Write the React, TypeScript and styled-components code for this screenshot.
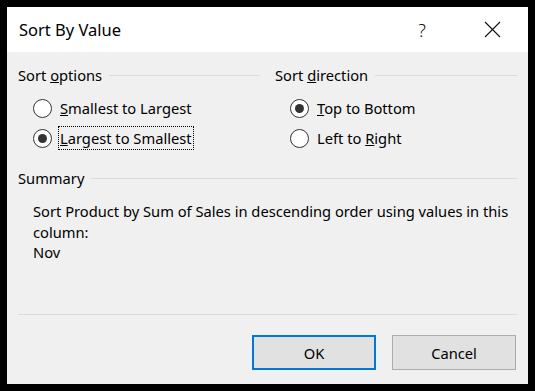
import styled, { createGlobalStyle } from "styled-components";

const GlobalStyle = createGlobalStyle`
  html, body {
    margin: 0;
    padding: 0;
    background: #000;
  }
  body {
    font-family: "Noto Sans", "Open Sans", sans-serif;
    color: #000;
  }
`;

const Frame = styled.div`
  width: 535px;
  height: 391px;
  padding: 7px;
  box-sizing: border-box;
  background: #000;
`;

const Dialog = styled.div`
  width: 521px;
  height: 377px;
  background: #f0f0f0;
  display: flex;
  flex-direction: column;
`;

const TitleBar = styled.div`
  height: 45px;
  background: #fff;
  display: flex;
  align-items: center;
  padding-left: 12px;
  font-size: 16.5px;
`;

const Title = styled.div`
  flex: 1;
`;

const TitleButton = styled.div<{ $gap?: number }>`
  width: 46px;
  height: 45px;
  display: flex;
  align-items: center;
  justify-content: center;
  font-size: 18px;
  font-weight: 300;
  color: #111;
  margin-right: ${(p) => p.$gap ?? 0}px;
`;

const Content = styled.div`
  flex: 1;
  padding: 13px 11px 0 11px;
  font-size: 14.7px;
`;

const Columns = styled.div`
  display: grid;
  grid-template-columns: 242px 1fr;
  column-gap: 15px;
`;

const GroupHeader = styled.div<{ $after?: number }>`
  display: flex;
  align-items: center;
  height: 20px;
  margin-bottom: ${(p) => p.$after ?? 8}px;
`;

const HeaderLine = styled.div`
  flex: 1;
  height: 1px;
  background: #dcdcdc;
  margin-left: 7px;
`;

const RadioRow = styled.div`
  display: flex;
  align-items: center;
  height: 30px;
  padding-left: 15px;
`;

const Circle = styled.span<{ $on?: boolean }>`
  width: 19px;
  height: 19px;
  box-sizing: border-box;
  border: 1px solid #333;
  border-radius: 50%;
  background: #fff;
  display: flex;
  align-items: center;
  justify-content: center;
  margin-right: 6px;
  &::after {
    content: "";
    display: ${(p) => (p.$on ? "block" : "none")};
    width: 9px;
    height: 9px;
    border-radius: 50%;
    background: #333;
  }
`;

const Label = styled.span<{ $focus?: boolean }>`
  padding: 1px 1px;
  line-height: 20px;
  border: 1px dotted ${(p) => (p.$focus ? "#000" : "transparent")};
`;

const Summary = styled.div`
  margin-top: 15px;
`;

const SummaryText = styled.div`
  padding-left: 15px;
  padding-right: 2px;
  line-height: 20.5px;
`;

const Footer = styled.div`
  padding: 0 11px 14px 11px;
`;

const Separator = styled.div`
  height: 1px;
  background: #dcdcdc;
  margin-bottom: 20px;
`;

const ButtonRow = styled.div`
  display: flex;
  justify-content: flex-end;
  gap: 16px;
  padding-right: 1px;
`;

const Button = styled.button<{ $primary?: boolean }>`
  width: 124px;
  height: 35px;
  box-sizing: border-box;
  background: #e1e1e1;
  border: ${(p) => (p.$primary ? "2px solid #0078d7" : "1px solid #adadad")};
  font-family: inherit;
  font-size: 14.7px;
  color: #000;
  padding: 0;
`;

function CloseIcon() {
  return (
    <svg width="17" height="17" viewBox="0 0 17 17">
      <path d="M1 1 L16 16 M16 1 L1 16" stroke="#111" strokeWidth="1.1" fill="none" />
    </svg>
  );
}

export default function App() {
  return (
    <Frame>
      <GlobalStyle />
      <Dialog>
        <TitleBar>
          <Title>Sort By Value</Title>
          <TitleButton $gap={24}>?</TitleButton>
          <TitleButton $gap={13}>
            <CloseIcon />
          </TitleButton>
        </TitleBar>
        <Content>
          <Columns>
            <div>
              <GroupHeader>
                Sort&nbsp;<u>o</u>ptions
                <HeaderLine />
              </GroupHeader>
              <RadioRow>
                <Circle />
                <Label>
                  <u>S</u>mallest to Largest
                </Label>
              </RadioRow>
              <RadioRow>
                <Circle $on />
                <Label $focus>
                  <u>L</u>argest to Smallest
                </Label>
              </RadioRow>
            </div>
            <div>
              <GroupHeader>
                Sort&nbsp;<u>d</u>irection
                <HeaderLine />
              </GroupHeader>
              <RadioRow>
                <Circle $on />
                <Label>
                  <u>T</u>op to Bottom
                </Label>
              </RadioRow>
              <RadioRow>
                <Circle />
                <Label>
                  Left to <u>R</u>ight
                </Label>
              </RadioRow>
            </div>
          </Columns>
          <Summary>
            <GroupHeader $after={13}>
              Summary
              <HeaderLine />
            </GroupHeader>
            <SummaryText>
              Sort Product by Sum of Sales in descending order using values in this column:
              <br />
              Nov
            </SummaryText>
          </Summary>
        </Content>
        <Footer>
          <Separator />
          <ButtonRow>
            <Button $primary>OK</Button>
            <Button>Cancel</Button>
          </ButtonRow>
        </Footer>
      </Dialog>
    </Frame>
  );
}
